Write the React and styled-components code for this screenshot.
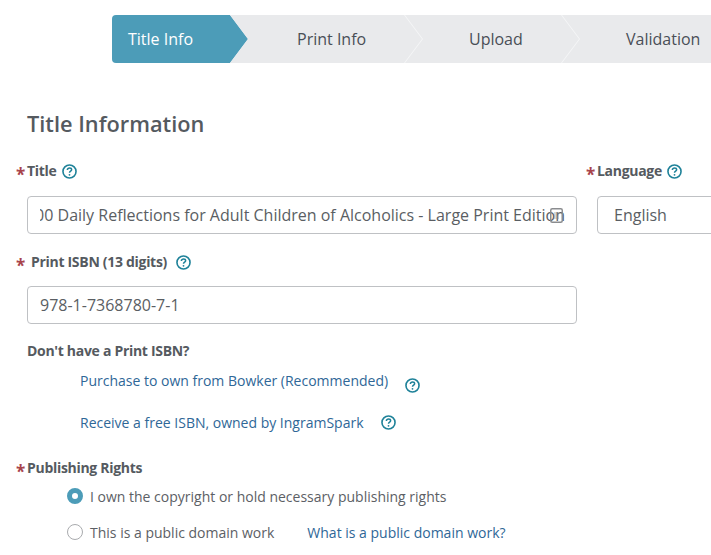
import styled, { createGlobalStyle } from 'styled-components';

const GlobalStyle = createGlobalStyle`
  html, body {
    margin: 0;
    padding: 0;
    background: #ffffff;
    overflow: hidden;
    font-family: 'Open Sans', 'Liberation Sans', sans-serif;
  }
`;

const Page = styled.div`
  width: 711px;
  height: 555px;
  overflow: hidden;
  box-sizing: border-box;
  padding-top: 15px;
`;

const Stepper = styled.div`
  display: flex;
  height: 48px;
  margin-left: 112px;
  width: 640px;
  background: linear-gradient(to right, transparent 118px, #f5f6f7 118px);
`;

const Step = styled.div`
  flex: none;
  box-sizing: border-box;
  width: ${(p) => p.$width}px;
  margin-left: ${(p) => p.$overlap || 0}px;
  padding-left: ${(p) => p.$pad}px;
  display: flex;
  align-items: center;
  font-size: 16px;
  color: ${(p) => (p.$active ? '#ffffff' : '#4a4f57')};
  background: ${(p) => (p.$active ? '#4c9cb8' : '#e9eaec')};
  border-radius: ${(p) => (p.$active ? '4px 0 0 4px' : 0)};
  clip-path: ${(p) =>
    p.$active
      ? 'polygon(0 0, calc(100% - 18px) 0, 100% 50%, calc(100% - 18px) 100%, 0 100%)'
      : 'polygon(0 0, calc(100% - 18px) 0, 100% 50%, calc(100% - 18px) 100%, 0 100%, 18px 50%)'};
`;

const Form = styled.div`
  padding-left: 27px;
`;

const Heading = styled.h1`
  margin: 45px 0 0;
  font-size: 21.75px;
  line-height: 32px;
  font-weight: 600;
  color: #555a5f;
`;

const TopRow = styled.div`
  display: flex;
  gap: 20px;
  margin-top: 20px;
`;

const Field = styled.div`
  flex: none;
  width: ${(p) => p.$width}px;
`;

const Label = styled.div`
  display: flex;
  align-items: center;
  position: relative;
  height: 20px;
  font-size: 14px;
  font-weight: 700;
  letter-spacing: -0.3px;
  color: #555a60;
  padding-left: ${(p) => p.$indent || 0}px;
  gap: ${(p) => p.$gap || 5}px;
`;

const Star = styled.span`
  position: absolute;
  left: -11px;
  top: 5px;
  font-size: 17px;
  line-height: 20px;
  font-weight: 700;
  color: #a8444c;
`;

const Input = styled.div`
  position: relative;
  box-sizing: border-box;
  margin-top: 16px;
  height: 38px;
  border: 1px solid #bfc1c4;
  border-radius: 4px;
  padding: 0 ${(p) => p.$right}px 0 ${(p) => p.$left}px;
  display: flex;
  align-items: center;
  font-size: 16px;
  color: #5a5e63;
  background: #fff;
`;

const ClippedValue = styled.div`
  flex: 1;
  min-width: 0;
  display: flex;
  justify-content: flex-end;
  overflow: hidden;
  white-space: nowrap;
`;

const AutofillIcon = styled.svg`
  position: absolute;
  right: 13px;
  top: 11px;
`;

const IsbnField = styled.div`
  margin-top: 17px;
  width: 550px;
`;

const IsbnInput = styled(Input)`
  margin-top: 15px;
`;

const Question = styled(Label)`
  margin-top: 16px;
`;

const LinkRow = styled.div`
  display: flex;
  align-items: center;
  gap: 17px;
  margin: ${(p) => p.$top}px 0 0 53px;
  height: 22px;
`;

const HelpLink = styled.span`
  font-size: 14px;
  color: #2f6797;
  position: relative;
  top: ${(p) => p.$lift || 0}px;
`;

const RightsLabel = styled(Label)`
  margin-top: 24px;
`;

const RadioRow = styled.div`
  display: flex;
  align-items: center;
  margin: ${(p) => p.$top}px 0 0 40px;
  height: 22px;
  font-size: 14px;
  color: #5c6065;
`;

const Radio = styled.span`
  flex: none;
  box-sizing: border-box;
  width: 16px;
  height: 16px;
  border-radius: 50%;
  margin-right: 7px;
  background: #fff;
  border: ${(p) => (p.$checked ? '5px solid #4c9cb8' : '1px solid #a9abae')};
`;

const DomainLink = styled(HelpLink)`
  margin-left: 33px;
`;

const HelpGlyph = styled.svg`
  flex: none;
  margin-top: ${(p) => p.$drop || 0}px;
`;

function HelpIcon({ drop = 2 }) {
  return (
    <HelpGlyph $drop={drop} width="15" height="15" viewBox="0 0 14 14" fill="none">
      <circle cx="7" cy="7" r="6.1" stroke="#1f8299" strokeWidth="1.5" />
      <path
        d="M5 5.5C5 4.4 5.9 3.8 7 3.8C8.1 3.8 9 4.4 9 5.4C9 6.7 7 6.7 7 8.2"
        stroke="#1f8299"
        strokeWidth="1.4"
      />
      <circle cx="7" cy="10.1" r="0.85" fill="#1f8299" />
    </HelpGlyph>
  );
}

export default function App() {
  return (
    <Page>
      <GlobalStyle />
      <Stepper>
        <Step $active $width={136} $pad={16}>Title Info</Step>
        <Step $overlap={-18} $width={192} $pad={67}>Print Info</Step>
        <Step $overlap={-17} $width={174} $pad={64}>Upload</Step>
        <Step $overlap={-17} $width={190} $pad={64}>Validation</Step>
      </Stepper>
      <Form>
        <Heading>Title Information</Heading>
        <TopRow>
          <Field $width={550}>
            <Label>
              <Star>*</Star>
              Title <HelpIcon />
            </Label>
            <Input $left={12} $right={11}>
              <ClippedValue>
                100 Daily Reflections for Adult Children of Alcoholics - Large Print Edition
              </ClippedValue>
              <AutofillIcon width="13" height="15" viewBox="0 0 13 15" fill="none">
                <rect x="0.75" y="0.75" width="11.5" height="13.5" rx="1.5" stroke="#8a8c8f" strokeWidth="1.5" />
                <rect x="4" y="4" width="5" height="7" fill="#8a8c8f" fillOpacity="0.35" />
              </AutofillIcon>
            </Input>
          </Field>
          <Field $width={200}>
            <Label>
              <Star>*</Star>
              Language <HelpIcon />
            </Label>
            <Input $left={16} $right={11}>English</Input>
          </Field>
        </TopRow>
        <IsbnField>
          <Label $indent={4} $gap={9}>
            <Star>*</Star>
            Print ISBN (13 digits) <HelpIcon />
          </Label>
          <IsbnInput $left={12} $right={11}>978-1-7368780-7-1</IsbnInput>
        </IsbnField>
        <Question>Don't have a Print ISBN?</Question>
        <LinkRow $top={14}>
          <HelpLink $lift={-5}>Purchase to own from Bowker (Recommended)</HelpLink>
          <HelpIcon drop={0} />
        </LinkRow>
        <LinkRow $top={15}>
          <HelpLink>Receive a free ISBN, owned by IngramSpark</HelpLink>
          <HelpIcon drop={0} />
        </LinkRow>
        <RightsLabel>
          <Star>*</Star>
          Publishing Rights
        </RightsLabel>
        <RadioRow $top={8}>
          <Radio $checked />
          I own the copyright or hold necessary publishing rights
        </RadioRow>
        <RadioRow $top={14}>
          <Radio />
          This is a public domain work
          <DomainLink>What is a public domain work?</DomainLink>
        </RadioRow>
      </Form>
    </Page>
  );
}
